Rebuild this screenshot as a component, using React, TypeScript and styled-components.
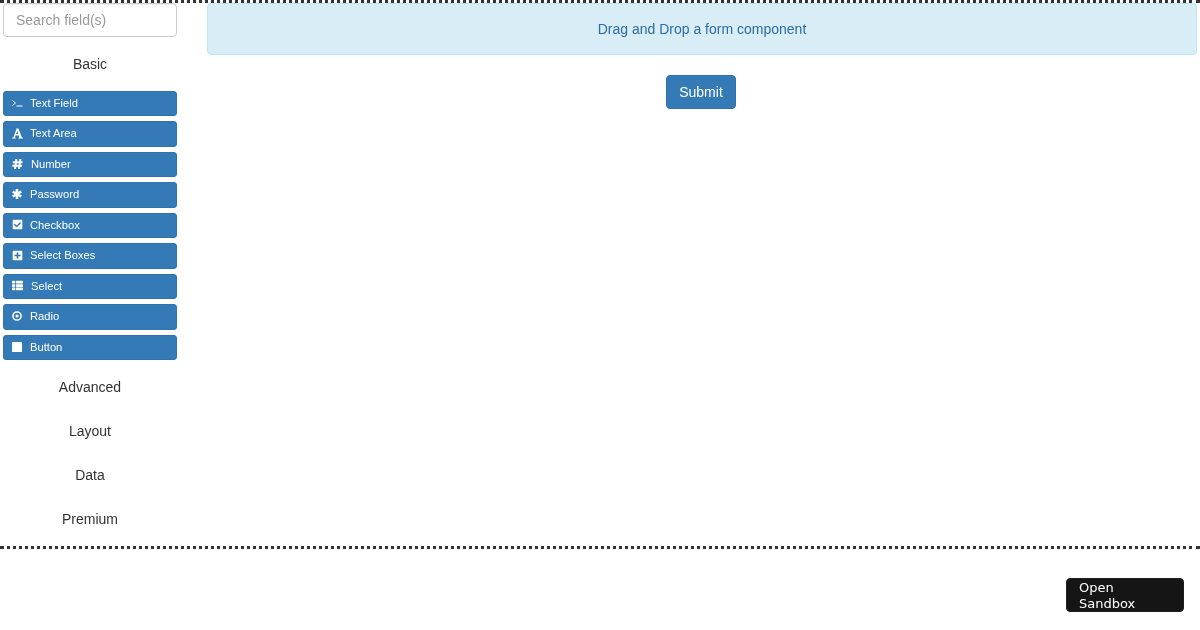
import styled, { createGlobalStyle } from "styled-components";
import { FaCheckSquare, FaPlusSquare, FaThList } from "react-icons/fa";

const GlobalStyle = createGlobalStyle`
    * {
        box-sizing: border-box;
    }

    body {
        margin: 0;
        background: #fff;
        font-family: "Liberation Sans", Arial, sans-serif;
        font-size: 14px;
        line-height: 1.42857;
        color: #333;
    }
`;

const Page = styled.div`
    width: 1200px;
    height: 630px;
    position: relative;
    overflow: hidden;
    will-change: transform;
`;

const Builder = styled.div`
    height: 549px;
    display: flex;
    gap: 30px;
    border-top: 3px dotted #333;
    border-bottom: 3px dotted #333;
    padding-left: 3px;
    padding-right: 3px;
`;

const Sidebar = styled.div`
    width: 174px;
    flex-shrink: 0;
`;

const SearchInput = styled.input`
    display: block;
    width: 100%;
    height: 34px;
    margin-bottom: 5.5px;
    padding: 6px 12px;
    border: 1px solid #ccc;
    border-radius: 4px;
    font-family: inherit;
    font-size: 14px;
    color: #555;
    box-shadow: inset 0 1px 1px rgba(0, 0, 0, 0.075);

    &::placeholder {
        color: #999;
        opacity: 1;
    }
`;

const GroupTitle = styled.div`
    height: 44px;
    display: flex;
    align-items: center;
    justify-content: center;
    color: #333;
    font-size: 14px;
`;

const ComponentList = styled.div`
    margin-top: 4.4px;
    display: flex;
    flex-direction: column;
    gap: 5px;
    margin-bottom: 5.2px;
`;

const ComponentButton = styled.div`
    height: 25.5px;
    display: flex;
    align-items: center;
    padding: 0 8px 1.6px;
    background-color: #337ab7;
    border: 1px solid #3072ad;
    border-radius: 3px;
    color: #fff;
    font-size: 11.2px;
`;

const IconBox = styled.span<{ $width: number; $nudge?: number }>`
    width: ${(p) => p.$width}px;
    flex-shrink: 0;
    display: flex;
    align-items: center;

    svg {
        flex-shrink: 0;
        margin-left: ${(p) => p.$nudge ?? 0}px;
    }
`;

const Canvas = styled.div`
    flex: 1;
    min-width: 0;
    display: flex;
    flex-direction: column;
    align-items: center;
`;

const Notice = styled.div`
    width: 100%;
    height: 52px;
    padding-top: 1px;
    display: flex;
    align-items: center;
    justify-content: center;
    background-color: #d9edf7;
    border: 1px solid #bce8f1;
    border-radius: 4px;
    color: #2c6ca6;
    font-size: 14px;
`;

const SubmitButton = styled.button`
    margin-top: 20px;
    margin-right: 2px;
    height: 34px;
    padding: 7px 12px 5px;
    background-color: #337ab7;
    border: 1px solid #3072ad;
    border-radius: 4px;
    color: #fff;
    font-family: inherit;
    font-size: 14px;
    line-height: 1.42857;
`;

const SandboxLink = styled.div`
    position: absolute;
    left: 1066px;
    top: 578px;
    width: 118px;
    height: 34px;
    padding: 1px 12px;
    background-color: #151515;
    border: 1px solid #1f1f1f;
    border-radius: 4px;
    color: #fff;
    font-family: "DejaVu Sans", sans-serif;
    font-size: 13px;
    line-height: 16px;
`;

const TerminalIcon = () => (
    <svg width="11" height="10" viewBox="0 0 11 10" fill="none" stroke="#fff">
        <path d="M0.5 2.5 L3.5 5 L0.5 7.5" strokeWidth="0.9" />
        <path d="M4.5 8 H10.5" strokeWidth="1" />
    </svg>
);

const FontIcon = () => (
    <svg width="11" height="11" viewBox="0 0 12 12" fill="#fff">
        <path
            fillRule="evenodd"
            d="M0.2 11.5v-.9l.9-.2.6-.6L5 .6h2l3.6 9.2.6.6.7.2v.9H6.9v-.9l1.1-.2-.6-2.2H3.9l-.8 2.2 1.1.2v.9z M4.4 6.6h2.5L5.7 3.2z"
        />
    </svg>
);

const HashIcon = () => (
    <svg width="11" height="10" viewBox="0 0 11 10" fill="none" stroke="#fff" strokeWidth="2">
        <path d="M4.4 0 L3 10 M8.4 0 L7 10 M0.8 3.3 H10.6 M0.3 6.7 H10.1" />
    </svg>
);

const AsteriskIcon = () => (
    <svg width="10" height="10" viewBox="0 0 10 10" fill="none" stroke="#fff" strokeWidth="2.6">
        <path d="M5 0 V10 M0.7 2.5 L9.3 7.5 M0.7 7.5 L9.3 2.5" />
    </svg>
);

const RadioIcon = () => (
    <svg width="10" height="10" viewBox="0 0 10 10">
        <circle cx="5" cy="5" r="4.1" fill="none" stroke="#fff" strokeWidth="1.5" />
        <circle cx="5" cy="5" r="1.6" fill="#fff" />
    </svg>
);

const StopIcon = () => (
    <svg width="10" height="10" viewBox="0 0 10 10" fill="#fff">
        <rect width="10" height="10" rx="0.4" />
    </svg>
);

const basicFields = [
    { label: "Text Field", icon: <TerminalIcon />, width: 18 },
    { label: "Text Area", icon: <FontIcon />, width: 18 },
    { label: "Number", icon: <HashIcon />, width: 19 },
    { label: "Password", icon: <AsteriskIcon />, width: 18 },
    { label: "Checkbox", icon: <FaCheckSquare size={11} />, width: 18, nudge: -0.5 },
    { label: "Select Boxes", icon: <FaPlusSquare size={11} />, width: 18, nudge: -0.5 },
    { label: "Select", icon: <FaThList size={11} />, width: 19 },
    { label: "Radio", icon: <RadioIcon />, width: 18 },
    { label: "Button", icon: <StopIcon />, width: 18 },
];

const otherGroups = ["Advanced", "Layout", "Data", "Premium"];

const App = () => {
    return (
        <Page>
            <GlobalStyle />
            <Builder>
                <Sidebar>
                    <SearchInput placeholder="Search field(s)" />
                    <GroupTitle>Basic</GroupTitle>
                    <ComponentList>
                        {basicFields.map((field) => (
                            <ComponentButton key={field.label}>
                                <IconBox $width={field.width} $nudge={field.nudge}>
                                    {field.icon}
                                </IconBox>
                                {field.label}
                            </ComponentButton>
                        ))}
                    </ComponentList>
                    {otherGroups.map((group) => (
                        <GroupTitle key={group}>{group}</GroupTitle>
                    ))}
                </Sidebar>
                <Canvas>
                    <Notice>Drag and Drop a form component</Notice>
                    <SubmitButton>Submit</SubmitButton>
                </Canvas>
            </Builder>
            <SandboxLink>Open Sandbox</SandboxLink>
        </Page>
    );
};

export default App;
